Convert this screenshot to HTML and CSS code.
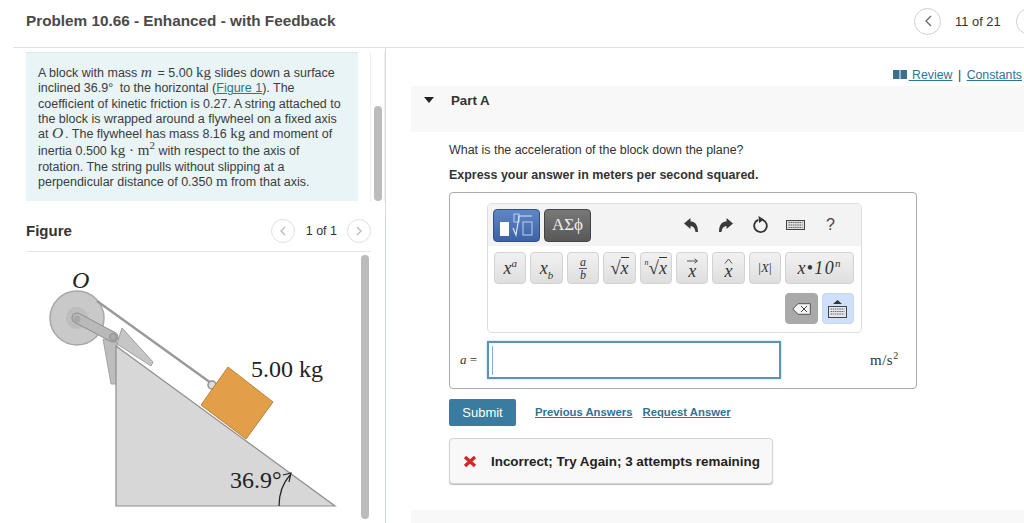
FILE: index.html
```html
<!DOCTYPE html>
<html lang="en">
<head>
    <meta charset="UTF-8">
    <meta name="viewport" content="width=device-width, initial-scale=1.0">
    <title>Problem 10.66 - Enhanced - with Feedback</title>
    <link rel="stylesheet" href="styles.css">
</head>
<body>
    <header class="top-bar">
        <h1>Problem 10.66 - Enhanced - with Feedback</h1>
        <div class="pager">
            <span class="circle-btn"><svg width="10" height="14" viewBox="0 0 10 14"><path d="M8 2 3 7l5 5" fill="none" stroke="#666" stroke-width="1.3"/></svg></span>
            <span class="pager-text">11 of 21</span>
            <span class="circle-btn"></span>
        </div>
    </header>

    <div class="columns">
        <!-- left side: problem text and figure -->
        <aside class="left-pane">
            <div class="problem-row">
                <div class="problem-box">
                    A block with mass <i class="math">m</i> = 5.00 <span class="math">kg</span> slides down a surface<br>
                    inclined 36.9<span class="degree">&deg;</span> to the horizontal (<a href="#">Figure 1</a>). The<br>
                    coefficient of kinetic friction is 0.27. A string attached to<br>
                    the block is wrapped around a flywheel on a fixed axis<br>
                    at <i class="math">O</i>. The flywheel has mass 8.16 <span class="math">kg</span> and moment of<br>
                    <span class="tall-line">inertia 0.500 <span class="math">kg &middot; m<sup>2</sup></span> with respect to the axis of</span><br>
                    rotation. The string pulls without slipping at a<br>
                    perpendicular distance of 0.350 <span class="math">m</span> from that axis.
                </div>
                <div class="scroll-track track-top"><div class="scroll-thumb"></div></div>
            </div>

            <div class="figure-head">
                <h2>Figure</h2>
                <div class="figure-pager">
                    <span class="circle-btn small"><svg width="8" height="12" viewBox="0 0 8 12"><path d="M6 2 2 6l4 4" fill="none" stroke="#bbb" stroke-width="1.3"/></svg></span>
                    <span class="pager-text">1 of 1</span>
                    <span class="circle-btn small"><svg width="8" height="12" viewBox="0 0 8 12"><path d="m2 2 4 4-4 4" fill="none" stroke="#bbb" stroke-width="1.3"/></svg></span>
                </div>
            </div>

            <div class="figure-body">
                <svg class="diagram" width="333" height="270" viewBox="26 253 333 270">
                    <polygon points="103,340 117,343 117,385 111,385" fill="#bdbdbd" stroke="#a5a5a5"/>
                    <polygon points="116,347 335,507 116,507" fill="#d7d7d8" stroke="#8e8e8e" stroke-width="1.2"/>
                    <polygon points="122,329 153,363 151,367 117,345" fill="#c6c6c6" stroke="#a0a0a0"/>
                    <circle cx="77" cy="319" r="27" fill="#c9c9c9" stroke="#a8a8a8" stroke-width="1.5"/>
                    <circle cx="77" cy="319" r="11" fill="#bdbdbd"/>
                    <line x1="97" y1="302" x2="211" y2="384" stroke="#999" stroke-width="2.4"/>
                    <line x1="77" y1="319" x2="113" y2="338" stroke="#8e8e8e" stroke-width="11" stroke-linecap="round"/>
                    <line x1="77" y1="319" x2="113" y2="338" stroke="#b9b9b9" stroke-width="9" stroke-linecap="round"/>
                    <circle cx="77" cy="320" r="3.5" fill="#a8a8a8"/>
                    <circle cx="113" cy="338" r="3.5" fill="#aaa" stroke="#8e8e8e"/>
                    <circle cx="212" cy="386" r="4" fill="#ddd" stroke="#8e8e8e" stroke-width="1.5"/>
                    <polygon points="228,368 273,403 246,440 201,406" fill="#e29e48" stroke="#b98237"/>
                    <path d="M279 507C279 494 283 484 290 476" fill="none" stroke="#222" stroke-width="1.2"/>
                    <path d="M283 476 291 474 289 483" fill="none" stroke="#222" stroke-width="1.2"/>
                    <text class="fig-label" x="72" y="289" font-style="italic">O</text>
                    <text class="fig-label" x="251" y="378">5.00 kg</text>
                    <text class="fig-label" x="230" y="489">36.9&deg;</text>
                </svg>
                <div class="scroll-track track-figure"><div class="scroll-thumb"></div></div>
            </div>
        </aside>

        <!-- right side: Part A -->
        <main class="right-pane">
            <div class="review-links">
                <svg class="book-icon" width="14" height="9" viewBox="0 0 14 9"><path d="M0 0h6.500v9H0zM7.500 0H14v9H7.500z" fill="#3b6f8f"/></svg>
                <a href="#">&nbsp;Review</a>
                <span class="sep">|</span>
                <a href="#">Constants</a>
            </div>

            <div class="part-band">
                <span class="part-arrow"></span>
                <span class="part-title">Part A</span>
            </div>

            <div class="part-content">
                <p class="question">What is the acceleration of the block down the plane?</p>
                <p class="instruction">Express your answer in meters per second squared.</p>

                <div class="answer-box">
                    <div class="math-toolbar">
                        <div class="tool-top">
                            <span class="tab tab-template">
                                <svg width="36" height="25" viewBox="0 0 36 25">
                                    <rect x="1" y="9" width="9" height="14" fill="#fff"/>
                                    <rect x="15" y="1" width="5" height="8" fill="none" stroke="#bcd0ee"/>
                                    <path d="M14 15l3 7 3-19h13" fill="none" stroke="#dbe6f6" stroke-width="1.2"/>
                                    <rect x="24" y="9" width="9" height="13" fill="none" stroke="#bcd0ee"/>
                                </svg>
                            </span>
                            <span class="tab tab-greek">&Alpha;&Sigma;&#981;</span>
                            <div class="tool-actions">
                                <span class="action"><svg width="14" height="15" viewBox="0 0 14 15"><path d="M0 5.500 6.500 0v3.500C10.500 3.500 14 6 14 14h-2.500C11 10.500 10 8.500 6.500 8v3z" fill="#3a3a3a"/></svg></span>
                                <span class="action"><svg width="14" height="15" viewBox="0 0 14 15"><path transform="matrix(-1 0 0 1 14 0)" d="M0 5.500 6.500 0v3.500C10.500 3.500 14 6 14 14h-2.500C11 10.500 10 8.500 6.500 8v3z" fill="#3a3a3a"/></svg></span>
                                <span class="action"><svg width="17" height="18" viewBox="0 0 17 18"><path d="M10.500 3.800a6.300 6.300 0 1 1-4.300.1" fill="none" stroke="#333" stroke-width="1.8"/><path d="M6.500 0l5.500 3.500-5 3.500z" fill="#333"/></svg></span>
                                <span class="action"><svg width="19" height="10" viewBox="0 0 19 10"><rect x=".5" y=".5" width="18" height="9" fill="#ddd" stroke="#444"/><path d="M2.500 2.500h14M2.500 5h14M2.500 7.500h14" stroke="#666" stroke-dasharray="1.500 .7"/></svg></span>
                                <span class="action help">?</span>
                            </div>
                        </div>
                        <div class="tool-row">
                            <span class="key"><i>x<sup>a</sup></i></span>
                            <span class="key"><i>x<sub>b</sub></i></span>
                            <span class="key key-frac"><i class="num">a</i><i>b</i></span>
                            <span class="key"><span class="radical">&radic;<i class="over">x</i></span></span>
                            <span class="key"><sup class="root-n">n</sup><span class="radical">&radic;<i class="over">x</i></span></span>
                            <span class="key key-accent"><svg width="11" height="6" viewBox="0 0 11 6"><path d="M0 3h10M7.500 .8 10.500 3 7.500 5.200" fill="none" stroke="#444" stroke-width=".9"/></svg><i>x</i></span>
                            <span class="key key-accent"><svg width="9" height="6" viewBox="0 0 9 6"><path d="M1 5.500 4.500 1 8 5.500" fill="none" stroke="#444" stroke-width=".9"/></svg><i>x</i></span>
                            <span class="key key-abs">|<i>X</i>|</span>
                            <span class="key key-wide"><i>x</i>&bull;<i>10<sup>n</sup></i></span>
                        </div>
                        <div class="tool-row tool-row-end">
                            <span class="key key-delete"><svg width="19" height="12" viewBox="0 0 19 12"><path d="M6 .7h12.300v10.600H6L.8 6z" fill="#f4f4f4" stroke="#555"/><path d="m9 3 6 6m0-6-6 6" stroke="#444"/></svg></span>
                            <span class="key key-keyboard"><svg width="19" height="19" viewBox="0 0 19 19"><path d="M9.500 1 14 5H5z" fill="#333"/><rect x=".5" y="7.500" width="18" height="11" fill="#e4e8ee" stroke="#444"/><path d="M2.500 10h14M2.500 12.500h14M2.500 15h14" stroke="#666" stroke-dasharray="1.500 .7"/></svg></span>
                        </div>
                    </div>

                    <div class="answer-row">
                        <span class="answer-label"><i>a</i> =</span>
                        <div class="answer-input"><span class="caret"></span></div>
                        <span class="answer-unit">m/s<sup>2</sup></span>
                    </div>
                </div>

                <div class="submit-row">
                    <button class="submit-btn">Submit</button>
                    <a href="#" class="action-link">Previous Answers</a>
                    <a href="#" class="action-link">Request Answer</a>
                </div>

                <div class="feedback">
                    <svg width="14" height="13" viewBox="0 0 14 13"><path d="M2 2l10 9M12 2 2 11" stroke="#cf2a2a" stroke-width="3.400"/></svg>
                    <span>Incorrect; Try Again; 3 attempts remaining</span>
                </div>
            </div>

            <div class="bottom-band"></div>
        </main>
    </div>
</body>
</html>
```

FILE: styles.css
```css
body {
    margin: 0;
    width: 1024px;
    height: 523px;
    overflow: hidden;
    background-color: white;
    color: #333;
    font-family: "Liberation Sans", Arial, sans-serif;
    font-size: 12.4px;
}
a {
    color: #2f7396;
}
.top-bar {
    display: flex;
    justify-content: space-between;
    align-items: center;
    height: 48px;
    margin-left: 13px;
    padding: 0 0 5px 13px;
    box-sizing: border-box;
    border-bottom: 1px solid #e2e2e2;
}
.top-bar h1 {
    margin: 0;
    color: #4a4a4a;
    font-size: 15.3px;
}
.pager {
    display: flex;
    align-items: center;
    flex: none;
    width: 110px;
    overflow: hidden;
}
.pager .pager-text {
    flex: none;
    margin: 0 15px 0 14px;
    font-size: 12.9px;
}
.circle-btn {
    display: flex;
    align-items: center;
    justify-content: center;
    flex: none;
    width: 25px;
    height: 25px;
    border: 1px solid #d0d0d0;
    border-radius: 50%;
    background-color: white;
}
.circle-btn.small {
    width: 22px;
    height: 22px;
    border-color: #e0e0e0;
}
.columns {
    display: flex;
    height: 475px;
}

/* left column */
.left-pane {
    flex: none;
    width: 372px;
    height: 475px;
    margin-left: 13px;
    border-right: 1px solid #d3dbe4;
    border-image: linear-gradient(#ddd 167px, #c9d7e6 167px) 1;
}
.problem-row {
    display: flex;
    height: 153px;
    padding-left: 13px;
    padding-top: 4px;
}
.problem-box {
    width: 308px;
    height: 125px;
    padding: 13px 12px 10px 12px;
    background-color: #e8f4f6;
    border-top: 1px solid #dde8ec;
    line-height: 15.3px;
    font-size: 12.5px;
    color: #3c3c3c;
    white-space: nowrap;
}
.problem-box sup {
    font-size: 11px;
    line-height: 0;
}
.degree {
    margin-right: 3px;
}
.tall-line {
    display: inline-block;
    padding-top: 2px;
}
.math {
    font-family: "Liberation Serif", serif;
    font-size: 15px;
    line-height: 0;
}
i.math {
    margin-right: 2px;
    font-size: 15.5px;
}
.scroll-track {
    flex: none;
    box-sizing: border-box;
}
.scroll-thumb {
    width: 8px;
    background-color: #bcbcbc;
    border-radius: 4px;
}
.track-top {
    width: 15px;
    height: 149px;
    margin-left: 12px;
    padding: 54px 3px 0 3px;
    border-right: 1px solid #eee;
    border-left: 1px solid #f0f0f0;
}
.track-top .scroll-thumb {
    height: 95px;
}
.figure-head {
    display: flex;
    justify-content: space-between;
    align-items: center;
    box-sizing: border-box;
    height: 47px;
    margin: 0 14px 0 13px;
    padding-top: 4px;
    border-bottom: 1px solid #e2e6ea;
}
.figure-head h2 {
    margin: 0;
    font-size: 15px;
    color: #333;
}
.figure-pager {
    display: flex;
    align-items: center;
    margin-top: 1px;
}
.figure-pager .pager-text {
    margin: 0 10px 0 11px;
    font-size: 12.5px;
}
.figure-body {
    display: flex;
    padding-left: 13px;
}
.diagram {
    display: block;
    flex: none;
}
.fig-label {
    font-family: "Liberation Serif", serif;
    font-size: 24px;
    fill: #222;
}
.track-figure {
    width: 15px;
    padding: 3px 3px 0 2px;
}
.track-figure .scroll-thumb {
    height: 264px;
}

/* right column */
.right-pane {
    position: relative;
    flex: 1;
    min-width: 0;
}
.review-links {
    display: flex;
    justify-content: flex-end;
    align-items: center;
    box-sizing: border-box;
    height: 38px;
    padding-top: 15px;
    padding-right: 2px;
    font-size: 12.3px;
    white-space: pre;
}
.book-icon {
    margin-right: 2px;
}
.sep {
    margin: 0 5.5px;
}
.part-band {
    display: flex;
    box-sizing: border-box;
    height: 46px;
    margin-left: 25px;
    padding-top: 7px;
    background-color: #f8f8f8;
}
.part-arrow {
    width: 0;
    height: 0;
    margin: 4px 0 0 13px;
    border-left: 5.5px solid transparent;
    border-right: 5.5px solid transparent;
    border-top: 6px solid #222;
}
.part-title {
    margin-left: 17px;
    font-size: 13.3px;
    font-weight: bold;
}
.part-content {
    width: 468px;
    margin-left: 63px;
}
.question {
    margin: 11px 0 0;
    line-height: 15px;
    font-size: 12.44px;
}
.instruction {
    margin: 10px 0 0;
    line-height: 15px;
    font-size: 12.46px;
    font-weight: bold;
}
.answer-box {
    box-sizing: border-box;
    height: 197px;
    margin-top: 9px;
    padding: 10px 0 0 37px;
    border: 1px solid #aaa;
    border-radius: 4px;
}
.math-toolbar {
    box-sizing: border-box;
    width: 375px;
    height: 130px;
    border: 1px solid #ddd;
    border-radius: 5px;
    overflow: hidden;
}
.tool-top {
    display: flex;
    align-items: center;
    box-sizing: border-box;
    height: 42px;
    padding-left: 5px;
    background-color: #f3f3f3;
}
.tab {
    display: flex;
    align-items: center;
    justify-content: center;
    box-sizing: border-box;
    height: 33px;
    border: 1px solid #444;
    border-radius: 4px;
    color: #eee;
    font-family: "Liberation Serif", serif;
    font-size: 17px;
}
.tab-template {
    width: 47px;
    background: linear-gradient(#5f86c4, #3c62a6);
    border-color: #33517f;
}
.tab-greek {
    width: 47px;
    margin-left: 4px;
    background: linear-gradient(#787878, #585858);
}
.tool-actions {
    display: flex;
    margin-left: 82px;
}
.action {
    display: flex;
    align-items: center;
    justify-content: center;
    width: 35px;
    height: 24px;
}
.help {
    font-size: 16px;
    color: #444;
}
.tool-row {
    display: flex;
    gap: 4px;
    margin-top: 6px;
    padding-left: 6px;
}
.tool-row-end {
    justify-content: flex-end;
    margin-top: 9px;
    padding: 0 7px 0 0;
}
.tool-row-end .key {
    height: 31px;
}
.key {
    display: flex;
    align-items: center;
    justify-content: center;
    box-sizing: border-box;
    width: 32.4px;
    height: 32px;
    border: 1px solid #d2d2d2;
    border-radius: 4px;
    background: linear-gradient(#f1f1f1, #dedede);
    color: #333;
    font-family: "Liberation Serif", serif;
    font-size: 18px;
    white-space: nowrap;
}
.key sup, .key sub {
    font-size: 11px;
    line-height: 0;
}
.key-frac {
    flex-direction: column;
    font-size: 12px;
    line-height: 12px;
}
.key-frac .num {
    padding: 0 1px;
    border-bottom: 1px solid #555;
}
.radical {
    font-size: 19px;
}
.over {
    border-top: 1px solid #333;
    font-size: 18px;
}
.key .root-n {
    margin-top: -10px;
    font-style: italic;
    font-size: 8px;
}
.key-accent {
    flex-direction: column;
    line-height: 15px;
}
.key-abs {
    font-size: 13px;
}
.key-wide {
    width: 69px;
    letter-spacing: 1.3px;
}
.key-delete {
    background: #a9a9a9;
    border-color: #a9a9a9;
}
.key-keyboard {
    background: #cfe0fa;
    border-color: #c3d6f2;
}
.answer-row {
    display: flex;
    align-items: center;
    height: 38px;
    margin-top: 8px;
    margin-left: -37px;
}
.answer-label {
    box-sizing: border-box;
    width: 37px;
    padding-left: 10px;
    font-family: "Liberation Serif", serif;
    font-size: 13px;
}
.answer-input {
    display: flex;
    align-items: center;
    box-sizing: border-box;
    width: 294px;
    height: 38px;
    padding-left: 3px;
    border: 2px solid #5d94b4;
    box-shadow: 0 0 2px #a9c8da;
}
.caret {
    width: 1px;
    height: 29px;
    background-color: #8aa4e8;
}
.answer-unit {
    margin-left: 89px;
    font-family: "Liberation Serif", serif;
    font-size: 15px;
    letter-spacing: .5px;
}
.answer-unit sup {
    font-size: 10px;
    line-height: 0;
}
.submit-row {
    display: flex;
    align-items: center;
    height: 27px;
    margin-top: 10px;
}
.submit-btn {
    width: 67px;
    height: 27px;
    padding: 0;
    border: none;
    border-radius: 2px;
    background-color: #3a7ca0;
    color: white;
    font-family: "Liberation Sans", Arial, sans-serif;
    font-size: 13px;
}
.action-link {
    margin: 0 0 2px 19px;
    font-size: 11.3px;
    font-weight: bold;
}
.action-link + .action-link {
    margin-left: 10px;
}
.feedback {
    display: flex;
    align-items: center;
    gap: 14px;
    box-sizing: border-box;
    width: 324px;
    height: 46px;
    margin-top: 12px;
    padding: 1px 0 0 13px;
    border: 1px solid #d4d4d4;
    border-radius: 4px;
    background-color: #f8f8f8;
    box-shadow: 0 1px 1px #bbb;
    color: #222;
    font-size: 13.4px;
    font-weight: bold;
}
.bottom-band {
    position: absolute;
    left: 25px;
    right: 0;
    top: 462px;
    height: 13px;
    background-color: #f8f8f8;
}
```
